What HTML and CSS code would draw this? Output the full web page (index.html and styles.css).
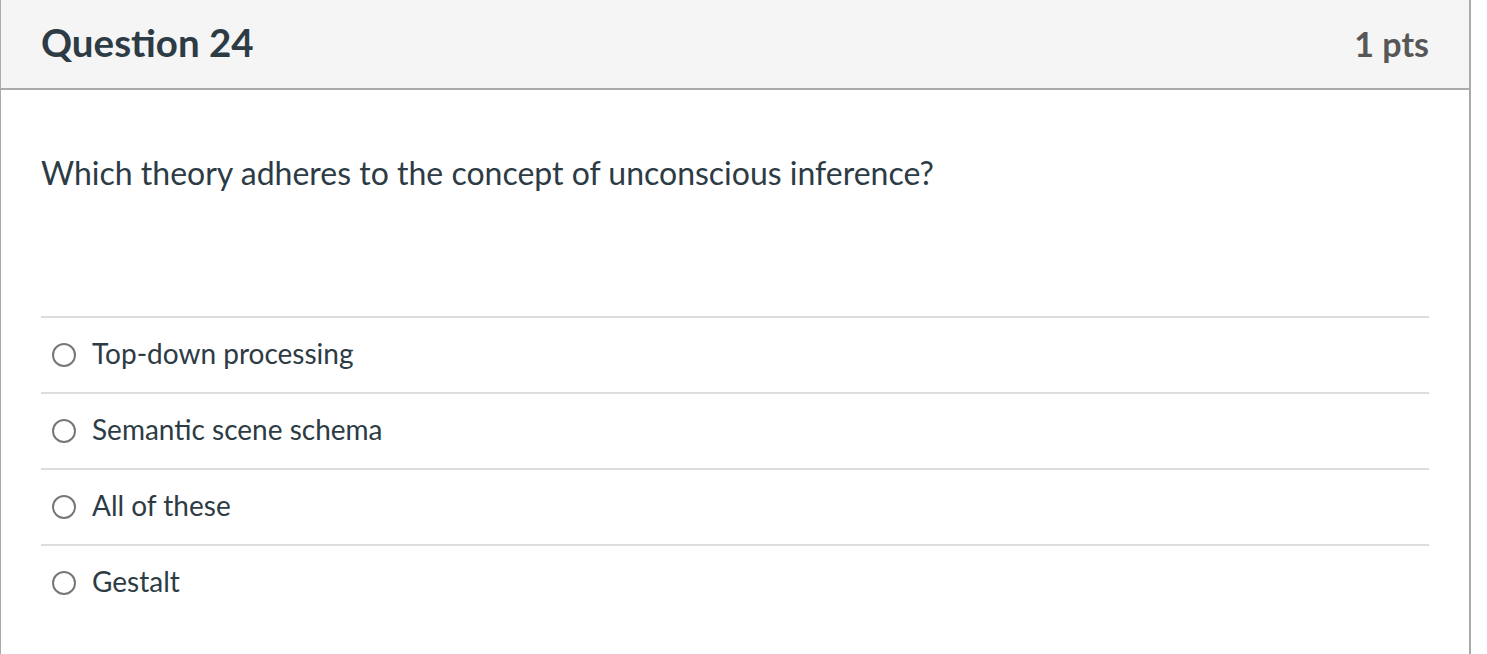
FILE: index.html
```html
<!DOCTYPE html>
<html lang="en">
<head>
<meta charset="utf-8">
<title>Question 24</title>
<link rel="stylesheet" href="styles.css">
</head>
<body>
<div class="card">
  <div class="header">
    <h2 class="title">Question 24</h2>
    <span class="points">1 pts</span>
  </div>
  <div class="content">
    <p class="question">Which theory adheres to the concept of unconscious inference?</p>
    <div class="answers">
      <label class="answer"><span class="radio"></span><span class="answer-text">Top-down processing</span></label>
      <label class="answer"><span class="radio"></span><span class="answer-text">Semantic scene schema</span></label>
      <label class="answer"><span class="radio"></span><span class="answer-text">All of these</span></label>
      <label class="answer"><span class="radio"></span><span class="answer-text">Gestalt</span></label>
    </div>
  </div>
</div>
</body>
</html>
```
FILE: styles.css
```css
html, body {
  margin: 0;
  padding: 0;
  background: #ffffff;
}
body {
  font-family: Lato, "Open Sans", "Liberation Sans", sans-serif;
  color: #2d3b45;
}
.card {
  width: 1468px;
  border-left: 1px solid #aaaaaa;
  border-right: 2px solid #aaaaaa;
  min-height: 700px;
  box-sizing: content-box;
}
.header {
  height: 90px;
  box-sizing: border-box;
  background: #f5f5f5;
  border-bottom: 2px solid #aaaaaa;
  display: flex;
  align-items: center;
  justify-content: space-between;
  padding: 0 40px 0 40px;
}
.title {
  margin: 0 0 3px 0;
  font-size: 38.5px;
  font-weight: 700;
  line-height: 1;
  color: #2d3b45;
}
.points {
  font-size: 34px;
  font-weight: 700;
  line-height: 1;
  color: #575757;
}
.content {
  padding: 0 40px;
}
.question {
  margin: 0;
  padding-top: 63px;
  font-size: 32px;
  line-height: 40px;
  height: 226px;
  box-sizing: border-box;
}
.answers {
  display: flex;
  flex-direction: column;
}
.answer {
  display: flex;
  align-items: center;
  height: 76px;
  box-sizing: border-box;
  border-top: 2px solid #dddddd;
  padding-left: 11px;
  font-size: 28px;
}
.radio {
  width: 20px;
  height: 20px;
  border: 2px solid #777777;
  border-radius: 50%;
  flex: none;
  margin-right: 16px;
}
.answer-text {
  line-height: 1;
  margin-bottom: 4px;
}
```
